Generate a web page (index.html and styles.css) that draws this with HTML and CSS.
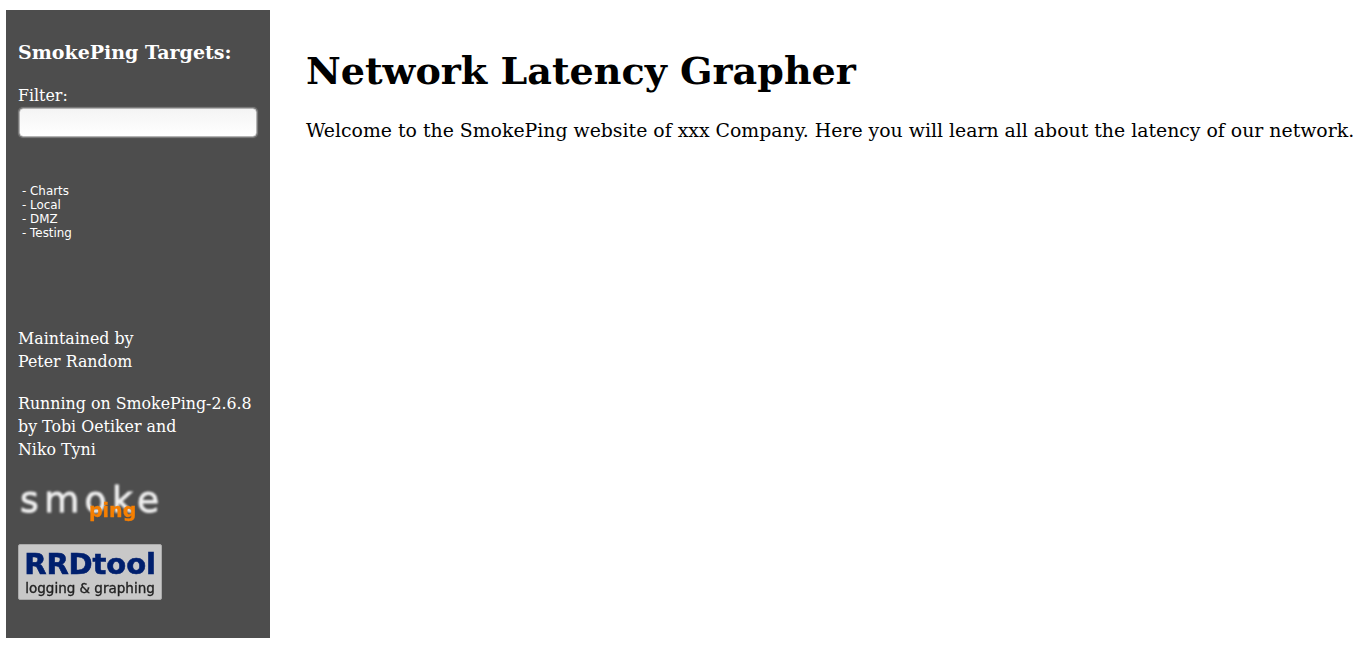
FILE: index.html
```html
<!DOCTYPE html>
<html lang="en">
<head>
<meta charset="utf-8">
<title>SmokePing</title>
<link rel="stylesheet" href="styles.css">
</head>
<body>
<div class="page">
  <aside class="sidebar">
    <h2 class="targets-title">SmokePing Targets:</h2>
    <label class="filter-label" for="filter">Filter:</label>
    <input class="filter-input" id="filter" type="text">
    <ul class="menu">
      <li>- Charts</li>
      <li>- Local</li>
      <li>- DMZ</li>
      <li>- Testing</li>
    </ul>
    <p class="info">Maintained by<br>Peter Random</p>
    <p class="info">Running on SmokePing-2.6.8<br>by Tobi Oetiker and<br>Niko Tyni</p>
    <div class="logo-smoke">
      <span class="smoke-word">smoke</span>
      <span class="smoke-ping">ping</span>
    </div>
    <div class="logo-rrd">
      <span class="rrd-word">RRDtool</span>
      <span class="rrd-sub">logging &amp; graphing</span>
    </div>
  </aside>
  <main class="content">
    <h1 class="title">Network Latency Grapher</h1>
    <p class="welcome">Welcome to the SmokePing website of xxx Company. Here you will learn all about the latency of our network.</p>
  </main>
</div>
</body>
</html>
```
FILE: styles.css
```css
html, body { margin: 0; padding: 0; background: #fff; }
body { font-family: "DejaVu Serif", serif; overflow: hidden; }
.page { display: flex; align-items: flex-start; padding: 10px 0 0 6px; }
.sidebar {
  box-sizing: border-box;
  flex: 0 0 264px;
  height: 628px;
  background: #4d4d4d;
  color: #fff;
  padding: 31px 12px 0;
}
.targets-title { margin: 0; font-size: 19px; line-height: 22px; font-weight: bold; }
.filter-label { display: block; margin-top: 23px; font-size: 15.84px; line-height: 19px; }
.filter-input {
  display: block;
  box-sizing: border-box;
  width: 238px;
  height: 29px;
  margin: 3px 1px 1px;
  border: 1px solid #b4b4b4;
  border-radius: 4px;
  background: linear-gradient(#f4f4f4, #ffffff);
  box-shadow: 0 0 1px 1px #808080;
  outline: none;
}
.menu {
  list-style: none;
  margin: 47px 0 0;
  padding: 0 0 0 4px;
  font-family: "DejaVu Sans", sans-serif;
  font-size: 11.9px;
  line-height: 14px;
}
.info { margin: 0 0 19px; font-size: 15.84px; line-height: 23px; }
.menu + .info { margin-top: 87px; }
.logo-smoke { position: relative; width: 144px; height: 42px; margin-top: 18px; }
.smoke-word {
  display: block;
  font-family: "DejaVu Sans", sans-serif;
  font-size: 36px;
  line-height: 40px;
  letter-spacing: 5.4px;
  padding-left: 2px;
  white-space: nowrap;
  color: #f0f0f0;
  -webkit-text-stroke: 0.8px #f0f0f0;
  filter: blur(1px);
}
.smoke-ping {
  position: absolute;
  left: 71px;
  top: 18px;
  font-family: "DejaVu Sans", sans-serif;
  font-weight: bold;
  font-size: 19px;
  line-height: 24px;
  color: #f67f00;
  -webkit-text-stroke: 0.3px #f67f00;
  filter: blur(0.3px);
}
.logo-rrd {
  box-sizing: border-box;
  width: 144px;
  height: 56px;
  margin-top: 22px;
  background: #c8c8c8;
  border: 1px solid #aaa;
  border-radius: 2px;
  text-align: center;
  overflow: hidden;
  white-space: nowrap;
}
.rrd-word {
  display: block;
  font-family: "DejaVu Sans", sans-serif;
  font-weight: bold;
  font-size: 29px;
  line-height: 33px;
  margin-top: 3px;
  letter-spacing: -0.1px;
  color: #00206e;
  -webkit-text-stroke: 0.6px #00206e;
  filter: blur(0.4px);
}
.rrd-sub {
  display: block;
  margin-top: -1px;
  font-family: "DejaVu Sans", sans-serif;
  font-size: 13.5px;
  line-height: 16px;
  -webkit-text-stroke: 0.35px #222;
  color: #222;
  filter: blur(0.4px);
}
.content { margin-left: 36px; padding-top: 38px; white-space: nowrap; }
.title { margin: 0; font-size: 38.1px; line-height: 46px; font-weight: bold; color: #000; }
.welcome { margin: 25px 0 0; font-size: 18.88px; line-height: 23px; color: #000; }
```
